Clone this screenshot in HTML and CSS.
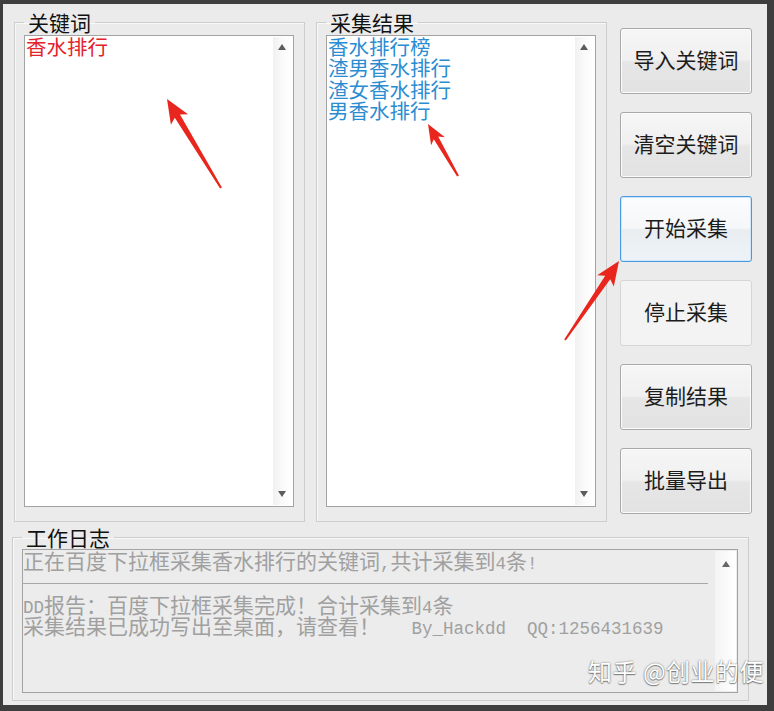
FILE: index.html
```html
<!DOCTYPE html>
<html lang="zh-CN">
<head>
  <meta charset="UTF-8">
  <title>百度下拉框采集</title>
  <link rel="stylesheet" href="styles.css">
</head>
<body>
  <div class="screen">
    <div class="window">
      <div class="top-row">
        <fieldset class="group">
          <legend>关键词</legend>
          <div class="list">
            <div class="list-text keywords">香水排行</div>
            <div class="scrollbar"><span class="up"></span><span class="down"></span></div>
          </div>
        </fieldset>
        <fieldset class="group">
          <legend>采集结果</legend>
          <div class="list">
            <div class="list-text results">香水排行榜<br>渣男香水排行<br>渣女香水排行<br>男香水排行</div>
            <div class="scrollbar"><span class="up"></span><span class="down"></span></div>
          </div>
        </fieldset>
        <div class="buttons">
          <button class="btn">导入关键词</button>
          <button class="btn">清空关键词</button>
          <button class="btn focused">开始采集</button>
          <button class="btn flat">停止采集</button>
          <button class="btn">复制结果</button>
          <button class="btn">批量导出</button>
        </div>
      </div>

      <fieldset class="group log-group">
        <legend>工作日志</legend>
        <div class="log">
          <div class="log-text">
            <div class="log-line">正在百度下拉框采集香水排行的关键词<span class="en">,</span>共计采集到<span class="en">4</span>条<span class="en">!</span></div>
            <div class="log-sep"></div>
            <div class="log-line"><span class="en">DD</span>报告：百度下拉框采集完成！合计采集到<span class="en">4</span>条</div>
            <div class="log-line">采集结果已成功写出至桌面，请查看！<span class="en">   By_Hackdd  QQ:1256431639</span></div>
          </div>
          <div class="scrollbar log-scroll"><span class="up"></span></div>
        </div>
      </fieldset>
    </div>

    <div class="watermark">知乎 @创业的便</div>

    <svg class="marks" width="774" height="711" viewBox="0 0 774 711">
      <polygon points="167,99 170.9,124.7 174.8,117.7 220.1,188.5 221.9,187.5 180,114.5 188,114.3" />
      <polygon points="428,124 431.1,145.3 433.8,139.2 457.1,176.5 458.9,175.5 438.2,136.6 444.9,137.3" />
      <polygon points="619,261 597.2,275.2 605.2,275.8 564.2,339.4 565.8,340.6 610.2,279.2 613.8,286.4" />
    </svg>
  </div>
</body>
</html>
```

FILE: styles.css
```css
body {
  margin: 0;
  font-family: "Noto Sans CJK SC", "Liberation Sans", sans-serif;
}

.screen {
  position: relative;
  width: 774px;
  height: 711px;
  overflow: hidden;
}

.window {
  box-sizing: border-box;
  width: 774px;
  height: 711px;
  border-style: solid;
  border-color: #3e3e3e;
  border-width: 4px 7px 6px 3px;
  background-color: #ebebeb;
  padding: 6px 0 0 9px;
}

.top-row {
  display: grid;
  grid-template-columns: 291px 291px 134px;
  column-gap: 11px;
  padding-left: 2px;
}

.group {
  box-sizing: border-box;
  margin: 0;
  min-width: 0;
  border: 1px solid #cdcdcd;
  box-shadow: inset 1px 1px 0 #f8f8f8;
  padding: 1px 10px 13px 9px;
  height: 512px;
}

.group legend {
  padding: 0 4px;
  font-size: 21px;
  line-height: 24px;
  color: #111;
}

.list {
  display: flex;
  height: 472px;
  box-sizing: border-box;
  border: 1px solid #a3a3a3;
  background-color: #fff;
}

.list-text {
  flex: 1;
  padding-left: 1px;
  font-size: 20.5px;
  line-height: 21.3px;
}

.keywords {
  color: #e3232b;
}

.results {
  color: #2b8cd2;
}

.scrollbar {
  position: relative;
  width: 19px;
  margin: 1px 1px 1px 0;
  background: linear-gradient(to right, #f1f1f1, #fafafa 50%, #ffffff);
}

.scrollbar span {
  position: absolute;
  left: 5px;
  width: 0;
  height: 0;
  border-left: 4px solid transparent;
  border-right: 4px solid transparent;
}

.scrollbar .up {
  top: 7px;
  border-bottom: 6px solid #5c5c5c;
}

.scrollbar .down {
  bottom: 8px;
  border-top: 6px solid #5c5c5c;
}

.buttons {
  display: flex;
  flex-direction: column;
  gap: 18px;
  padding-top: 18px;
  margin-left: 2px;
}

.btn {
  height: 66px;
  box-sizing: border-box;
  border: 1px solid #a9a9a9;
  border-radius: 3px;
  background: linear-gradient(#f6f6f6, #f0f0f0 48%, #e6e6e6 52%, #e2e2e2);
  box-shadow: inset 0 0 0 1px #fbfbfb;
  font-family: "Noto Sans CJK SC", sans-serif;
  font-size: 21px;
  line-height: 24px;
  color: #1c1c1c;
  padding: 0 0 5px;
}

.btn.focused {
  border-color: #4a9ae0;
  background: linear-gradient(#fbfcfd, #f5f7f9 48%, #e9edf0 52%, #edf3f8);
  box-shadow: inset 0 0 0 1px #cfe6fa;
}

.btn.flat {
  border-color: #d6d6d6;
  background: #f3f3f3;
  box-shadow: none;
}

.log-group {
  width: 737px;
  height: 176px;
  margin-top: 3px;
  padding: 0 10px 6px 9px;
}

.log {
  display: flex;
  height: 144px;
  box-sizing: border-box;
  border: 1px solid #a3a3a3;
  background-color: #ececec;
}

.log-text {
  flex: 1;
  color: #a0a0a0;
  font-size: 21px;
}

.log-line {
  height: 21px;
  line-height: 21px;
  white-space: pre;
}

.en {
  font-family: "Liberation Mono", monospace;
  font-size: 17.5px;
}

.log-sep {
  height: 1px;
  margin: 12px 7px 10px 0;
  background-color: #a8a8a8;
}

.log-scroll {
  width: 21px;
  margin: 1px 1px 1px 0;
  background: linear-gradient(to right, #f4f4f4, #ffffff);
}

.log-scroll .up {
  left: 7px;
  top: 10px;
  border-bottom-color: #666;
}

.watermark {
  position: absolute;
  left: 588px;
  top: 656px;
  font-size: 24px;
  line-height: 30px;
  color: #fff;
  text-shadow: 0 0 2px rgba(0, 0, 0, 0.55), 0 1px 1px rgba(0, 0, 0, 0.4);
  letter-spacing: 0.5px;
}

.marks {
  position: absolute;
  top: 0;
  left: 0;
  pointer-events: none;
}

.marks polygon {
  fill: #e8261d;
}
```
